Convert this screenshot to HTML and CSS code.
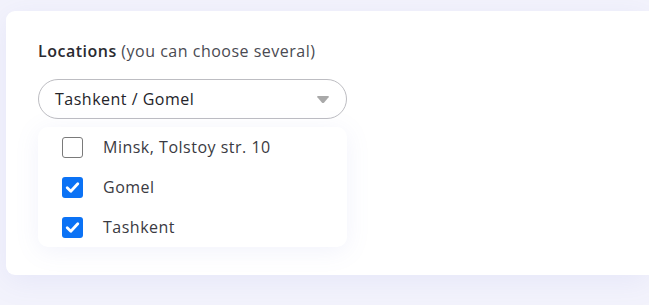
FILE: index.html
```html
<!DOCTYPE html>
<html>
<head>
<meta charset="utf-8">
<link rel="stylesheet" href="styles.css">
</head>
<body>
<div class="card">
  <div class="label"><b>Locations</b> (you can choose several)</div>
  <div class="select">
    <span class="value">Tashkent / Gomel</span>
    <svg class="arrow" width="14" height="10" viewBox="0 0 14 10"><path d="M2 2 H12 Q13.5 2 12.6 3.3 L8.2 8.4 Q7 9.6 5.8 8.4 L1.4 3.3 Q0.5 2 2 2 Z" fill="#a9a9a9"/></svg>
  </div>
  <div class="panel">
    <div class="row"><span class="box"></span><span class="text">Minsk, Tolstoy str. 10</span></div>
    <div class="row"><span class="box checked"><svg width="21" height="21" viewBox="0 0 21 21"><path d="M5.2 10.8 L8.8 14.3 L15.8 6.8" fill="none" stroke="#fff" stroke-width="2.8" stroke-linecap="round" stroke-linejoin="round"/></svg></span><span class="text">Gomel</span></div>
    <div class="row"><span class="box checked"><svg width="21" height="21" viewBox="0 0 21 21"><path d="M5.2 10.8 L8.8 14.3 L15.8 6.8" fill="none" stroke="#fff" stroke-width="2.8" stroke-linecap="round" stroke-linejoin="round"/></svg></span><span class="text">Tashkent</span></div>
  </div>
</div>
</body>
</html>
```
FILE: styles.css
```css
html, body {
  margin: 0;
  padding: 0;
}
body {
  background: #f3f3fc;
  font-family: "Open Sans", "Liberation Sans", sans-serif;
  color: #2b2b33;
  padding: 11px 0 0 6px;
  height: 305px;
  box-sizing: border-box;
  overflow: hidden;
}
.card {
  background: #fff;
  border-radius: 9px 0 0 9px;
  padding: 30px 0 28px 32px;
  box-shadow: 0 6px 30px rgba(120, 130, 220, 0.10);
}
.label {
  font-size: 16px;
  letter-spacing: 0.5px;
  line-height: 20px;
  color: #4a4a52;
}
.label b {
  font-weight: 600;
  color: #2a2a30;
}
.select {
  margin-top: 18px;
  width: 309px;
  height: 40px;
  box-sizing: border-box;
  border: 1px solid #bdbdc2;
  border-radius: 20px;
  display: flex;
  align-items: center;
  justify-content: space-between;
  padding: 0 16px 0 16px;
  font-size: 16px;
  letter-spacing: 0.5px;
  color: #24242a;
}
.arrow {
  display: block;
}
.panel {
  margin-top: 8px;
  width: 309px;
  background: #fff;
  border-radius: 10px;
  box-shadow: 0 4px 24px rgba(120, 130, 220, 0.10);
  display: flex;
  flex-direction: column;
}
.row {
  height: 40px;
  display: flex;
  align-items: center;
  padding-left: 24px;
  gap: 20px;
  font-size: 16px;
  letter-spacing: 0.5px;
  color: #3a3a42;
}
.box {
  width: 21px;
  height: 21px;
  box-sizing: border-box;
  border: 1.5px solid #7a7a7a;
  border-radius: 3px;
  display: block;
}
.box.checked {
  border: none;
  background: #0b72f5;
}
.box svg {
  display: block;
}
```
